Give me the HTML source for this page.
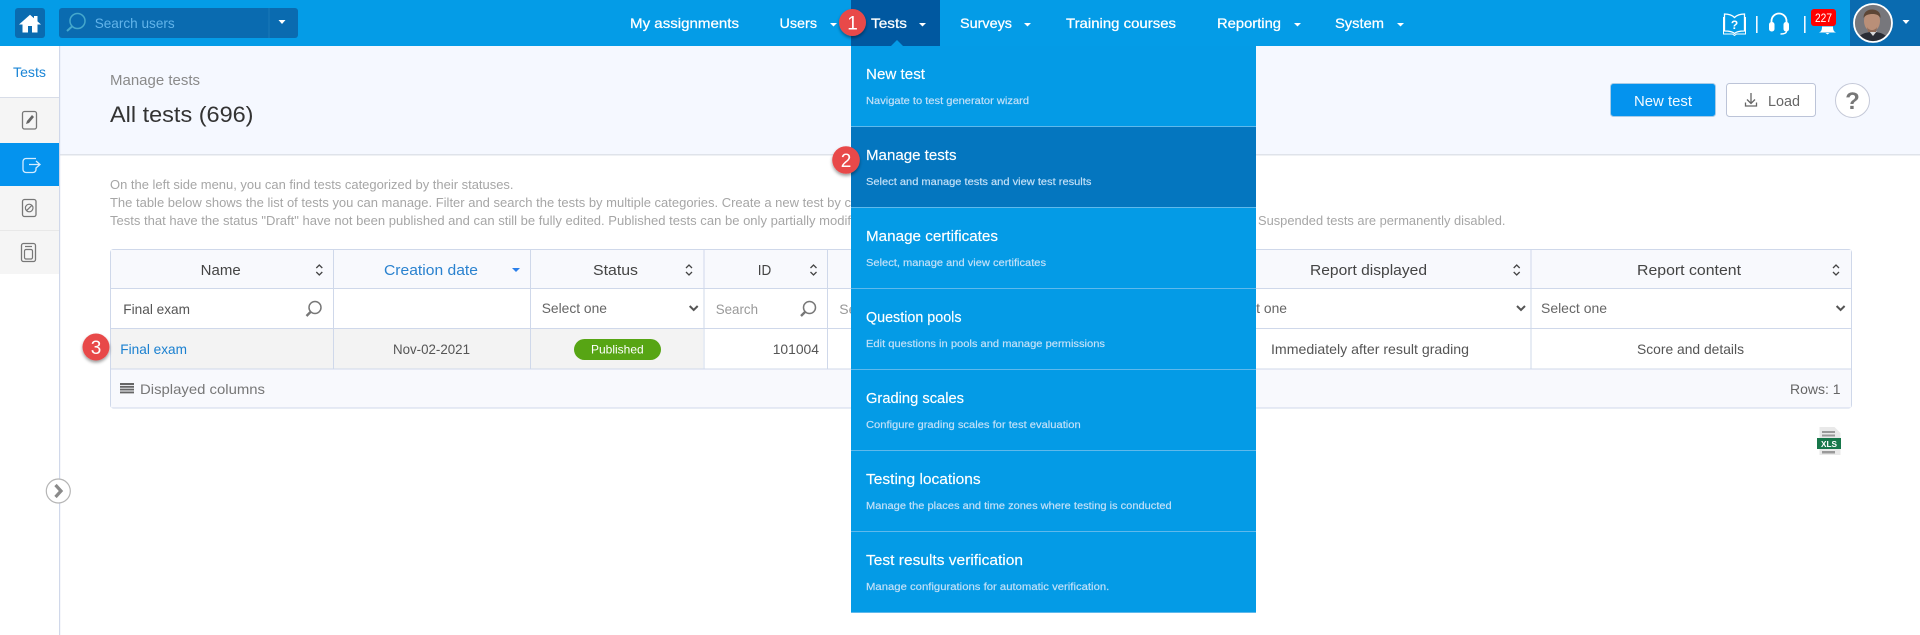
<!DOCTYPE html>
<html lang="en">
<head>
<meta charset="utf-8">
<title>Manage tests</title>
<style>
html,body{margin:0;padding:0;width:1920px;height:635px;overflow:hidden;background:#fff}
svg{display:block}
text{font-family:"Liberation Sans",sans-serif;font-size:14px;fill:#444}
.nav{fill:#fff;font-size:14px;stroke:#fff;stroke-width:.25}
.mt{fill:#fff;font-size:15px;stroke:#fff;stroke-width:.15}
.ms{fill:#c4e1f8;font-size:10px;stroke:#c4e1f8;stroke-width:.15}
.d{fill:#a6a6a6;font-size:12.5px}
.th{fill:#444;font-size:14.5px}
.c{fill:#555;font-size:14px}
.b{fill:#fff;font-size:19px}
</style>
</head>
<body>
<svg width="1920" height="635" viewBox="0 0 1920 635">
<defs>
<filter id="sh" x="-30%" y="-30%" width="160%" height="170%"><feDropShadow dx="0" dy="2" stdDeviation="1.6" flood-color="#000" flood-opacity=".4"/></filter>
<g id="sort" fill="none" stroke="#444" stroke-width="1.3"><path d="M-3-2 0-5 3-2M-3 2 0 5 3 2"/></g>
<g id="chev" fill="none" stroke="#555" stroke-width="2"><path d="M-4-2 0 2 4-2"/></g>
<g id="mag" fill="none" stroke="#777"><circle cx="1.5" cy="-1.5" r="6" stroke-width="1.5"/><path d="M-3 3-7 7" stroke-width="2.4"/></g>
</defs>

<!-- page -->
<rect width="1920" height="635" fill="#fff"/>
<rect x="60" y="46" width="1860" height="108" fill="#f5f8ff"/>
<rect x="60" y="154" width="1860" height="1.5" fill="#dfe3ea"/>

<!-- sidebar -->
<rect x="59" y="46" width="1.2" height="589" fill="#d0d8ea"/>
<text x="13" y="77" textLength="33" lengthAdjust="spacingAndGlyphs" style="fill:#1a85d6;font-size:14px">Tests</text>
<rect x="0" y="97" width="59" height="1.2" fill="#d8dde8"/>
<rect x="0" y="98" width="59" height="45" fill="#f5f5f5"/>
<rect x="0" y="143" width="59" height="43" fill="#0493ee"/>
<rect x="0" y="186" width="59" height="44" fill="#f5f5f5"/>
<rect x="0" y="230" width="59" height="1" fill="#e8e8e8"/>
<rect x="0" y="231" width="59" height="43" fill="#f5f5f5"/>
<rect x="22.5" y="111.5" width="14" height="17.5" rx="2" fill="none" stroke="#777" stroke-width="1.3"/>
<path d="M26 124l1-3 5-6 2 2-5 6z" fill="#666"/>
<path d="M36 158.500h-10a3 3 0 0 0-3 3v8a3 3 0 0 0 3 3h7a3 3 0 0 0 3-3v-2M29 164.500h10M36 161l4 3.500-4 3.500" fill="none" stroke="#d4ecff" stroke-width="1.3"/>
<rect x="22.500" y="199.500" width="13.500" height="17" rx="2" fill="none" stroke="#777" stroke-width="1.3"/>
<circle cx="29.200" cy="208" r="3.800" fill="none" stroke="#777" stroke-width="1.2"/><path d="M26.500 210.700l5.400-5.400" stroke="#777" stroke-width="1.2"/>
<rect x="21.500" y="243.500" width="14" height="18" rx="2" fill="none" stroke="#777" stroke-width="1.3"/>
<path d="M25 246.500h7" stroke="#777" stroke-width="1.2"/>
<rect x="24.500" y="249.500" width="8" height="9.500" rx="1.500" fill="none" stroke="#777" stroke-width="1.2"/>
<circle cx="58.300" cy="491" r="12" fill="#fff" stroke="#b5b5b5" stroke-width="1.2"/>
<path d="M55.500 485l5.500 6-5.500 6" fill="none" stroke="#8a8a8a" stroke-width="3.200"/>

<!-- page title -->
<text x="110" y="85" textLength="90" lengthAdjust="spacingAndGlyphs" style="fill:#8a8a8a;font-size:14.500px">Manage tests</text>
<text x="110" y="122" textLength="143.500" lengthAdjust="spacingAndGlyphs" style="fill:#333;font-size:22px">All tests (696)</text>
<rect x="1610.500" y="83.500" width="105" height="33" rx="3" fill="#0493ee" stroke="#a9cbe6"/>
<text x="1634" y="106" textLength="58" lengthAdjust="spacingAndGlyphs" style="fill:#f2f9ff;font-size:14.500px">New test</text>
<rect x="1726.500" y="83.500" width="89" height="33" rx="3" fill="#fff" stroke="#bcc4d8"/>
<path d="M1751 93v10M1747 99.500l4 4 4-4M1745.500 102.500v3.500h11v-3.500" fill="none" stroke="#666" stroke-width="1.300"/>
<text x="1768" y="106" textLength="32" lengthAdjust="spacingAndGlyphs" style="fill:#666;font-size:14.500px">Load</text>
<circle cx="1852.500" cy="100.500" r="17" fill="#fff" stroke="#c5c9d8"/>
<text x="1852.500" y="109" text-anchor="middle" style="fill:#777;font-size:24px;font-weight:bold">?</text>

<!-- description -->
<text class="d" x="110" y="189" textLength="403.500" lengthAdjust="spacingAndGlyphs">On the left side menu, you can find tests categorized by their statuses.</text>
<text class="d" x="110" y="207" textLength="741" lengthAdjust="spacingAndGlyphs">The table below shows the list of tests you can manage. Filter and search the tests by multiple categories. Create a new test by c</text>
<text class="d" x="110" y="225" textLength="741" lengthAdjust="spacingAndGlyphs">Tests that have the status "Draft" have not been published and can still be fully edited. Published tests can be only partially modif</text>
<text class="d" x="1258" y="225" textLength="247.500" lengthAdjust="spacingAndGlyphs">Suspended tests are permanently disabled.</text>

<!-- table -->
<rect x="110.500" y="249.500" width="1741" height="158.500" rx="3" fill="#fff" stroke="#cfd8ea"/>
<rect x="111" y="250" width="1740" height="38" fill="#f8f9fd"/>
<rect x="111" y="329" width="592" height="40" fill="#f3f3f3"/>
<rect x="111" y="369" width="1740" height="38.500" fill="#f8f9fd"/>
<g fill="#cfd8ea">
<rect x="111" y="288" width="1740" height="1"/>
<rect x="111" y="328" width="1740" height="1"/>
<rect x="111" y="368.500" width="1740" height="1"/>
<rect x="333" y="250" width="1" height="119"/>
<rect x="530" y="250" width="1" height="119"/>
<rect x="703.500" y="250" width="1" height="119"/>
<rect x="827" y="250" width="1" height="119"/>
<rect x="1530.500" y="250" width="1" height="119"/>
</g>
<text class="th" x="200.700" y="275" textLength="40" lengthAdjust="spacingAndGlyphs">Name</text>
<use href="#sort" transform="translate(319.300 270)"/>
<text class="th" x="384" y="275" textLength="94" lengthAdjust="spacingAndGlyphs" style="fill:#2a82cf">Creation date</text>
<path d="M512 268h8l-4 4z" fill="#2a7fea"/>
<text class="th" x="593" y="275" textLength="45" lengthAdjust="spacingAndGlyphs">Status</text>
<use href="#sort" transform="translate(689 270)"/>
<text class="th" x="757.700" y="275" textLength="13.500" lengthAdjust="spacingAndGlyphs">ID</text>
<use href="#sort" transform="translate(813.500 270)"/>
<text class="th" x="1310" y="275" textLength="117" lengthAdjust="spacingAndGlyphs">Report displayed</text>
<use href="#sort" transform="translate(1516.700 270)"/>
<text class="th" x="1637" y="275" textLength="104" lengthAdjust="spacingAndGlyphs">Report content</text>
<use href="#sort" transform="translate(1836 270)"/>

<text class="c" x="123.300" y="314" textLength="66.700" lengthAdjust="spacingAndGlyphs">Final exam</text>
<use href="#mag" transform="translate(313.500 309)"/>
<text class="c" x="541.700" y="313" textLength="65.300" lengthAdjust="spacingAndGlyphs" style="fill:#666">Select one</text>
<use href="#chev" transform="translate(693.700 308)"/>
<text class="c" x="715.700" y="314" textLength="42.300" lengthAdjust="spacingAndGlyphs" style="fill:#999">Search</text>
<use href="#mag" transform="translate(808 309)"/>
<text class="c" x="839.300" y="314" style="fill:#999">Search</text>
<text class="c" x="1221.500" y="313" textLength="65.500" lengthAdjust="spacingAndGlyphs" style="fill:#666">Select one</text>
<use href="#chev" transform="translate(1521 308)"/>
<text class="c" x="1541" y="313" textLength="66" lengthAdjust="spacingAndGlyphs" style="fill:#666">Select one</text>
<use href="#chev" transform="translate(1840.600 308)"/>

<text class="c" x="120.300" y="354" textLength="66.700" lengthAdjust="spacingAndGlyphs" style="fill:#1a80d0">Final exam</text>
<text class="c" x="393" y="354" textLength="77" lengthAdjust="spacingAndGlyphs">Nov-02-2021</text>
<rect x="574" y="339" width="87" height="21" rx="10.500" fill="#57a514"/>
<text x="591" y="353.500" textLength="52.700" lengthAdjust="spacingAndGlyphs" style="fill:#fff;font-size:12px">Published</text>
<text class="c" x="772.700" y="354" textLength="46.300" lengthAdjust="spacingAndGlyphs">101004</text>
<text class="c" x="1271" y="354" textLength="198" lengthAdjust="spacingAndGlyphs">Immediately after result grading</text>
<text class="c" x="1637" y="354" textLength="107" lengthAdjust="spacingAndGlyphs">Score and details</text>

<path d="M120 384h14M120 386.800h14M120 389.600h14M120 392.400h14" stroke="#666" stroke-width="1.900"/>
<text x="140" y="394" textLength="125" lengthAdjust="spacingAndGlyphs" style="fill:#777;font-size:14px">Displayed columns</text>
<text x="1790" y="394" textLength="50.600" lengthAdjust="spacingAndGlyphs" style="fill:#666;font-size:14px">Rows: 1</text>

<!-- xls -->
<path d="M1819.500 427h15l6 6v22h-21z" fill="#e9e9e9"/>
<path d="M1822 431h13v2h-13zM1822 434.500h13v2h-13zM1822 451h13v2.500h-13z" fill="#9a9a9a"/>
<rect x="1817" y="438" width="24" height="11" fill="#17774a"/>
<text x="1829" y="447" text-anchor="middle" textLength="16" lengthAdjust="spacingAndGlyphs" style="fill:#fff;font-size:8.500px;font-weight:bold">XLS</text>

<!-- header -->
<rect width="1920" height="46" fill="#049ce7"/>
<rect x="15" y="8" width="30" height="30" rx="3" fill="#0a6bb0"/>
<path d="M30 14.800 19 24.500h3.500V32.500h5.500v-6.500h4v6.500h5.500V24.500H41l-3.500-3.100V16h-3.500v2.300z" fill="#fff"/>
<rect x="59" y="8" width="239" height="30" rx="3" fill="#0a6bb0"/>
<rect x="268.500" y="8" width="1" height="30" fill="#1a7ab8"/>
<circle cx="77.500" cy="21" r="7.500" fill="none" stroke="#45a8cc" stroke-width="1.500"/>
<path d="M72 26.500l-5 4.500" stroke="#45a8cc" stroke-width="2"/>
<text x="94.700" y="28" textLength="80" lengthAdjust="spacingAndGlyphs" style="fill:#62b4ea;font-size:14px">Search users</text>
<path d="M278.500 20h7l-3.500 4z" fill="#fff"/>

<rect x="851" y="0" width="89" height="46" fill="#0058a0"/>
<text class="nav" x="630" y="28" textLength="109" lengthAdjust="spacingAndGlyphs">My assignments</text>
<text class="nav" x="779.500" y="28" textLength="37.500" lengthAdjust="spacingAndGlyphs">Users</text>
<path d="M830 23h7l-3.500 3.500z" fill="#fff"/>
<text class="nav" x="871" y="28" textLength="36" lengthAdjust="spacingAndGlyphs">Tests</text>
<path d="M919 23h7l-3.500 3.500z" fill="#fff"/>
<text class="nav" x="960" y="28" textLength="52" lengthAdjust="spacingAndGlyphs">Surveys</text>
<path d="M1024 23h7l-3.500 3.500z" fill="#fff"/>
<text class="nav" x="1066" y="28" textLength="110" lengthAdjust="spacingAndGlyphs">Training courses</text>
<text class="nav" x="1217" y="28" textLength="64" lengthAdjust="spacingAndGlyphs">Reporting</text>
<path d="M1294 23h7l-3.500 3.500z" fill="#fff"/>
<text class="nav" x="1335" y="28" textLength="49" lengthAdjust="spacingAndGlyphs">System</text>
<path d="M1397 23h7l-3.500 3.500z" fill="#fff"/>

<!-- header right -->
<path d="M1734.500 17.500c-2-2-6-3.500-10-3.500v17c4 0 8 .500 10 2.500 2-2 6-2.500 10-2.500V14c-4 0-8 1.500-10 3.500zM1727 14v0M1742 14v0" fill="none" stroke="#fff" stroke-width="1.300"/>
<path d="M1723.500 17v17h9l2 1.500 2-1.500h9V17" fill="none" stroke="#fff" stroke-width="1"/>
<text x="1734.500" y="29" text-anchor="middle" style="fill:#fff;font-size:12px;font-weight:bold">?</text>
<rect x="1756" y="16" width="1.600" height="17" fill="#f0f8ff"/>
<path d="M1771.500 24v-3a7.500 7.500 0 0 1 15 0v3" fill="none" stroke="#fff" stroke-width="1.800"/>
<rect x="1769" y="22" width="5.500" height="9.500" rx="2.500" fill="#fff"/>
<rect x="1783.500" y="22" width="5.500" height="9.500" rx="2.500" fill="#fff"/>
<path d="M1786.500 31c0 2.500-3 3-6 3" fill="none" stroke="#fff" stroke-width="1.400"/>
<rect x="1804" y="16" width="1.600" height="17" fill="#f0f8ff"/>
<path d="M1819 32.500c2-1 3-2 3-6h11c0 4 1 5 3 6z" fill="#fff"/>
<path d="M1825.500 33h4l-2 1.500z" fill="#fff"/>
<rect x="1811" y="9" width="25" height="17" rx="3" fill="#f00"/>
<text x="1823.500" y="22" text-anchor="middle" textLength="17" lengthAdjust="spacingAndGlyphs" style="fill:#fff;font-size:12px">227</text>
<rect x="1850" y="0" width="70" height="46" fill="#0a6bb0"/>
<circle cx="1873" cy="23" r="19" fill="#6d6c70"/>
<clipPath id="av"><circle cx="1873" cy="23" r="19"/></clipPath>
<g clip-path="url(#av)">
<rect x="1854" y="4" width="38" height="38" fill="#77777c"/>
<path d="M1856 42c2-8 10-10 17-10s14 2 17 10z" fill="#2a2d36"/>
<path d="M1869 31l4 5 4-5z" fill="#d8d8da"/>
<ellipse cx="1872" cy="21" rx="8" ry="10.500" fill="#b98f78"/>
<path d="M1863.500 18c0-6 4-8.500 8.500-8.500s9 2.500 8.500 8.500c-2-3-4-4-8-4s-7 1-9 4z" fill="#5d4636"/>
<path d="M1867 27c2 4 8 4 10 0l-1 5h-8z" fill="#8e6a58"/>
</g>
<circle cx="1873" cy="23" r="19" fill="none" stroke="#fff" stroke-width="1.800"/>
<path d="M1902.500 20h7l-3.500 4z" fill="#fff"/>

<!-- dropdown -->
<path d="M897 40l6 6h-12z" fill="#049be6"/>
<rect x="851" y="46" width="405" height="567" fill="#049be6"/>
<rect x="851" y="127" width="405" height="80" fill="#0476bf"/>
<g fill="#5fb9ec">
<rect x="851" y="126" width="405" height="1"/>
<rect x="851" y="207" width="405" height="1"/>
<rect x="851" y="288" width="405" height="1"/>
<rect x="851" y="369" width="405" height="1"/>
<rect x="851" y="450" width="405" height="1"/>
<rect x="851" y="531" width="405" height="1"/>
<rect x="851" y="612" width="405" height="1"/>
</g>
<text class="mt" x="866" y="79" textLength="59" lengthAdjust="spacingAndGlyphs">New test</text>
<text class="ms" x="866" y="104" textLength="163" lengthAdjust="spacingAndGlyphs">Navigate to test generator wizard</text>
<text class="mt" x="866" y="160" textLength="90.500" lengthAdjust="spacingAndGlyphs">Manage tests</text>
<text class="ms" x="866" y="185" textLength="225.400" lengthAdjust="spacingAndGlyphs">Select and manage tests and view test results</text>
<text class="mt" x="866" y="241" textLength="132" lengthAdjust="spacingAndGlyphs">Manage certificates</text>
<text class="ms" x="866" y="266" textLength="180" lengthAdjust="spacingAndGlyphs">Select, manage and view certificates</text>
<text class="mt" x="866" y="322" textLength="95.500" lengthAdjust="spacingAndGlyphs">Question pools</text>
<text class="ms" x="866" y="347" textLength="239" lengthAdjust="spacingAndGlyphs">Edit questions in pools and manage permissions</text>
<text class="mt" x="866" y="403" textLength="98" lengthAdjust="spacingAndGlyphs">Grading scales</text>
<text class="ms" x="866" y="428" textLength="214.700" lengthAdjust="spacingAndGlyphs">Configure grading scales for test evaluation</text>
<text class="mt" x="866" y="484" textLength="114.700" lengthAdjust="spacingAndGlyphs">Testing locations</text>
<text class="ms" x="866" y="509" textLength="305.700" lengthAdjust="spacingAndGlyphs">Manage the places and time zones where testing is conducted</text>
<text class="mt" x="866" y="565" textLength="157" lengthAdjust="spacingAndGlyphs">Test results verification</text>
<text class="ms" x="866" y="590" textLength="243.300" lengthAdjust="spacingAndGlyphs">Manage configurations for automatic verification.</text>

<!-- callouts -->
<circle cx="852.500" cy="22.500" r="13.500" fill="#e84a4a" filter="url(#sh)"/>
<text class="b" x="852.500" y="29.500" text-anchor="middle">1</text>
<circle cx="846" cy="160" r="13.800" fill="#e84a4a" filter="url(#sh)"/>
<text class="b" x="846" y="167" text-anchor="middle">2</text>
<circle cx="96" cy="347" r="13.500" fill="#e84a4a" filter="url(#sh)"/>
<text class="b" x="96" y="354" text-anchor="middle">3</text>
</svg>
</body>
</html>
